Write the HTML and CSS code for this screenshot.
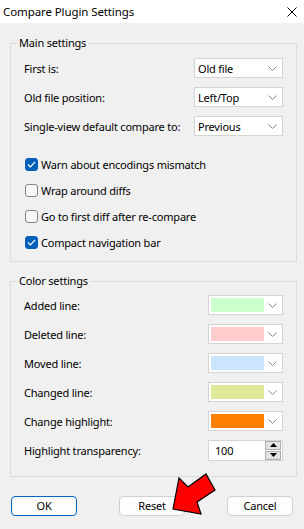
FILE: index.html
```html
<!DOCTYPE html>
<html>
<head>
<meta charset="utf-8">
<link rel="stylesheet" href="styles.css">
</head>
<body>
<div class="window">
  <div class="titlebar">
    <span class="title">Compare Plugin Settings</span>
    <svg class="close" width="10" height="10" viewBox="0 0 10 10"><path d="M0.5 0.5 L9.5 9.5 M9.5 0.5 L0.5 9.5" stroke="#000" stroke-width="1" fill="none"/></svg>
  </div>
  <div class="content">
    <fieldset class="group main">
      <legend>Main settings</legend>
      <div class="rows">
        <div class="row"><span>First is:</span><div class="select"><span>Old file</span><svg class="chev" width="9" height="5" viewBox="0 0 9 5"><path d="M0.5 0.5 L4.5 4.5 L8.5 0.5" stroke="#8a8a8a" fill="none"/></svg></div></div>
        <div class="row"><span>Old file position:</span><div class="select"><span>Left/Top</span><svg class="chev" width="9" height="5" viewBox="0 0 9 5"><path d="M0.5 0.5 L4.5 4.5 L8.5 0.5" stroke="#8a8a8a" fill="none"/></svg></div></div>
        <div class="row"><span>Single-view default compare to:</span><div class="select"><span>Previous</span><svg class="chev" width="9" height="5" viewBox="0 0 9 5"><path d="M0.5 0.5 L4.5 4.5 L8.5 0.5" stroke="#8a8a8a" fill="none"/></svg></div></div>
      </div>
      <div class="checks">
        <div class="check"><span class="box on"><svg width="9" height="7" viewBox="0 0 9 7"><path d="M1 3.5 L3.3 5.8 L8 1" stroke="#fff" stroke-width="1.2" fill="none"/></svg></span><span>Warn about encodings mismatch</span></div>
        <div class="check"><span class="box"></span><span>Wrap around diffs</span></div>
        <div class="check"><span class="box"></span><span>Go to first diff after re-compare</span></div>
        <div class="check"><span class="box on"><svg width="9" height="7" viewBox="0 0 9 7"><path d="M1 3.5 L3.3 5.8 L8 1" stroke="#fff" stroke-width="1.2" fill="none"/></svg></span><span>Compact navigation bar</span></div>
      </div>
    </fieldset>
    <fieldset class="group color">
      <legend>Color settings</legend>
      <div class="rows">
        <div class="row"><span>Added line:</span><div class="picker"><span class="swatch" style="background:#ccffcc"></span><svg class="chev" width="9" height="5" viewBox="0 0 9 5"><path d="M0.5 0.5 L4.5 4.5 L8.5 0.5" stroke="#8a8a8a" fill="none"/></svg></div></div>
        <div class="row"><span>Deleted line:</span><div class="picker"><span class="swatch" style="background:#ffcccc"></span><svg class="chev" width="9" height="5" viewBox="0 0 9 5"><path d="M0.5 0.5 L4.5 4.5 L8.5 0.5" stroke="#8a8a8a" fill="none"/></svg></div></div>
        <div class="row"><span>Moved line:</span><div class="picker"><span class="swatch" style="background:#cce5ff"></span><svg class="chev" width="9" height="5" viewBox="0 0 9 5"><path d="M0.5 0.5 L4.5 4.5 L8.5 0.5" stroke="#8a8a8a" fill="none"/></svg></div></div>
        <div class="row"><span>Changed line:</span><div class="picker"><span class="swatch" style="background:#e0e89a"></span><svg class="chev" width="9" height="5" viewBox="0 0 9 5"><path d="M0.5 0.5 L4.5 4.5 L8.5 0.5" stroke="#8a8a8a" fill="none"/></svg></div></div>
        <div class="row"><span>Change highlight:</span><div class="picker"><span class="swatch" style="background:#ff8000"></span><svg class="chev" width="9" height="5" viewBox="0 0 9 5"><path d="M0.5 0.5 L4.5 4.5 L8.5 0.5" stroke="#8a8a8a" fill="none"/></svg></div></div>
        <div class="row"><span>Highlight transparency:</span>
          <div class="spin"><span class="spin-val">100</span>
            <div class="spin-btns">
              <span class="sbtn"><svg width="7" height="4" viewBox="0 0 7 4"><path d="M3.5 0 L7 4 L0 4 Z" fill="#000"/></svg></span>
              <span class="sbtn"><svg width="7" height="4" viewBox="0 0 7 4"><path d="M0 0 L7 0 L3.5 4 Z" fill="#000"/></svg></span>
            </div>
          </div>
        </div>
      </div>
    </fieldset>
    <div class="buttons">
      <div class="btn default">OK</div>
      <div class="btn">Reset</div>
      <div class="btn">Cancel</div>
    </div>
  </div>
  <svg class="arrow" width="64" height="56" viewBox="0 0 64 56"><polygon points="13,44 19,13 28,22 46,9 55,25 37,37 41,49" fill="#ff0000" stroke="#000" stroke-width="1.2" stroke-linejoin="miter"/></svg>
</div>
</body>
</html>
```

FILE: styles.css
```css
* { box-sizing: border-box; }
html, body { margin: 0; padding: 0; }
body {
  width: 304px;
  height: 529px;
  background: #f0f0f0;
  font-family: "Noto Sans", "Open Sans", sans-serif;
  font-size: 11px;
  letter-spacing: -0.2px;
  color: #000;
  overflow: hidden;
  white-space: nowrap;
}
.window { position: relative; width: 304px; height: 529px; }
.titlebar {
  height: 23px;
  background: #fff;
  display: flex;
  align-items: center;
  justify-content: space-between;
  padding: 0 7px 0 3px;
}
.title { font-size: 11.5px; line-height: 16px; letter-spacing: -0.1px; }
.close { display: block; margin-top: 1px; }
.content {
  padding: 12px 7px 0 10px;
}
.group {
  margin: 0;
  border: 1px solid #dcdcdc;
  padding: 7px 13px 11px 13px;
  min-width: 0;
}
.group legend {
  padding: 0 2px;
  margin-left: -7px;
  line-height: 16px;
}
.group.color { margin-top: 11px; padding-top: 6px; padding-bottom: 16px; }
.rows { display: flex; flex-direction: column; gap: 9px; }
.row {
  display: flex;
  align-items: center;
  justify-content: space-between;
  height: 20px;
}
.select {
  width: 89px;
  height: 20px;
  background: #fff;
  border: 1px solid #d4d4d4;
  display: flex;
  align-items: center;
  justify-content: space-between;
  padding: 0 5px 0 3px;
}
.chev { display: block; }
.checks {
  margin-top: 20px;
  display: flex;
  flex-direction: column;
  gap: 10px;
}
.check {
  display: flex;
  align-items: center;
  height: 16px;
  padding-left: 1px;
}
.box {
  width: 13px;
  height: 13px;
  border: 1px solid #858585;
  border-radius: 3px;
  background: #f7f7f7;
  margin-right: 3px;
  display: flex;
  align-items: center;
  justify-content: center;
}
.box.on { background: #005fb8; border-color: #005fb8; }
.box svg { display: block; }
.picker {
  width: 75px;
  height: 20px;
  background: #fff;
  border: 1px solid #d4d4d4;
  display: flex;
  align-items: center;
  justify-content: space-between;
  padding: 0 5px 0 2px;
}
.swatch { display: block; width: 53px; height: 14px; }
.spin {
  width: 75px;
  height: 21px;
  background: #fff;
  border: 1px solid #d4d4d4;
  display: flex;
  align-items: center;
  justify-content: space-between;
  padding: 0 0 0 6px;
}
.spin-btns {
  display: flex;
  flex-direction: column;
  gap: 1px;
  padding: 0 1px 0 0;
}
.sbtn {
  width: 16px;
  height: 9px;
  background: #e3e3e3;
  border: 1px solid #adadad;
  display: flex;
  align-items: center;
  justify-content: center;
}
.sbtn svg { display: block; }
.buttons {
  margin-top: 19px;
  margin-left: 1px;
  width: 282px;
  display: flex;
  justify-content: space-between;
}
.btn {
  width: 66px;
  height: 20px;
  background: #fdfdfd;
  border: 1px solid #d0d0d0;
  border-radius: 4px;
  display: flex;
  align-items: center;
  justify-content: center;
  line-height: 16px;
}
.btn.default { border-color: #0067c0; }
.arrow { position: absolute; left: 160px; top: 465px; }
```
